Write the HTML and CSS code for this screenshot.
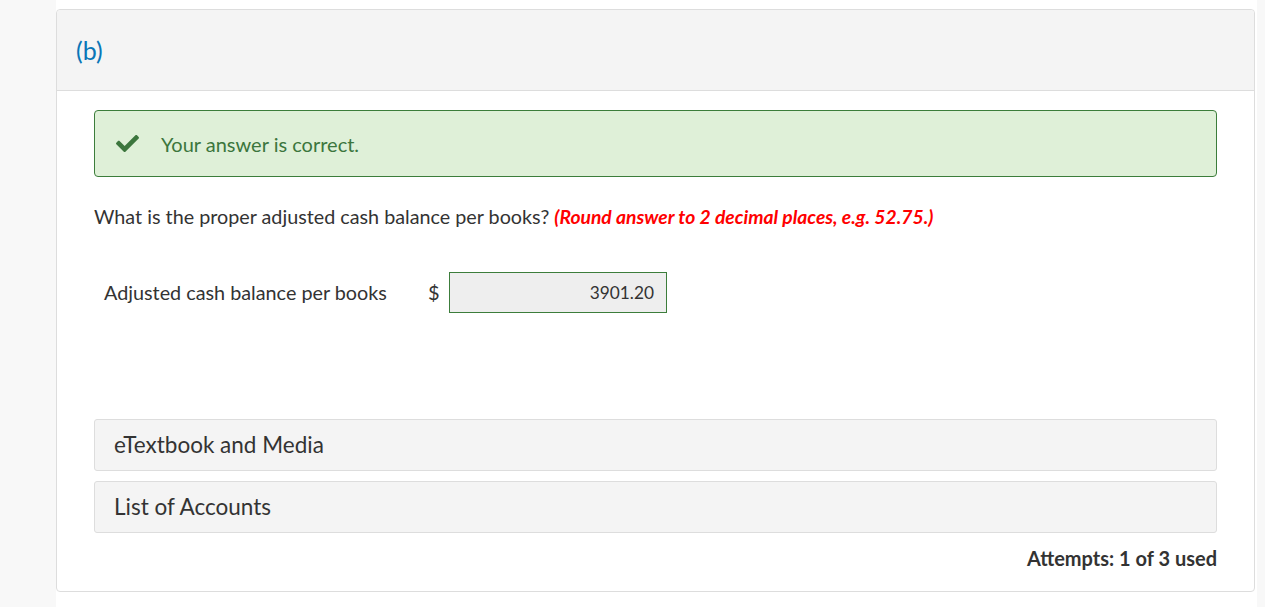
FILE: index.html
```html
<!DOCTYPE html>
<html lang="en">
<head>
<meta charset="utf-8">
<title>Question (b)</title>
<link rel="stylesheet" href="styles.css">
</head>
<body>
<div class="page">
  <aside class="gutter"></aside>
  <main class="main">
    <section class="card">
      <header class="card-head"><span class="part">(b)</span></header>
      <div class="card-body">
        <div class="alert">
          <svg class="check" viewBox="0 0 512 512" aria-hidden="true"><path d="M173.898 439.404l-166.4-166.4c-9.997-9.997-9.997-26.206 0-36.204l36.203-36.204c9.997-9.998 26.207-9.998 36.204 0L192 312.69 432.095 72.596c9.997-9.997 26.207-9.997 36.204 0l36.203 36.204c9.997 9.997 9.997 26.206 0 36.204l-294.4 294.401c-9.998 9.997-26.207 9.997-36.204-.001z"/></svg>
          <span class="alert-text">Your answer is correct.</span>
        </div>
        <p class="question">What is the proper adjusted cash balance per books? <em class="hint">(Round answer to 2 decimal places, e.g. 52.75.)</em></p>
        <div class="answer-row">
          <span class="answer-label">Adjusted cash balance per books</span>
          <span class="currency">$</span>
          <span class="answer-box">3901.20</span>
        </div>
        <div class="panels">
          <div class="panel">eTextbook and Media</div>
          <div class="panel">List of Accounts</div>
        </div>
        <div class="attempts">Attempts: 1 of 3 used</div>
      </div>
    </section>
  </main>
  <aside class="gutter-right"></aside>
</div>
</body>
</html>
```
FILE: styles.css
```css
* { box-sizing: border-box; }
html, body { margin: 0; padding: 0; }
body {
  font-family: Lato, "Open Sans", sans-serif;
  color: #333;
  background: #fff;
}
.page {
  display: flex;
  min-height: 607px;
}
.gutter {
  width: 56px;
  flex: none;
  background: #f8f8f8;
}
.gutter-right {
  width: 8px;
  flex: none;
  background: #f8f8f8;
  margin-left: 2px;
}
.main {
  flex: 1;
  padding-top: 9px;
}
.card {
  border: 1px solid #ddd;
  border-radius: 4px;
  background: #fff;
}
.card-head {
  height: 81px;
  background: #f4f4f4;
  border-bottom: 1px solid #ddd;
  border-radius: 4px 4px 0 0;
  display: flex;
  align-items: center;
  padding-left: 19px;
}
.part {
  color: #0a76b7;
  font-size: 25px;
}
.card-body {
  padding: 19px 37px 21px 37px;
}
.alert {
  height: 67px;
  background: #dff0d8;
  border: 1px solid #3c7d3b;
  border-radius: 4px;
  display: flex;
  align-items: center;
  padding-left: 21px;
  color: #3c763d;
}
.check {
  width: 23px;
  height: 23px;
  fill: #3c763d;
  margin-right: 22px;
}
.alert-text {
  font-size: 20px;
}
.question {
  margin: 28px 0 0;
  font-size: 19.75px;
  line-height: 1.2;
}
.hint {
  color: #f00;
  font-weight: bold;
  font-size: 19.3px;
}
.answer-row {
  margin-top: 43px;
  display: flex;
  align-items: center;
  padding-left: 10px;
}
.answer-label {
  font-size: 19.8px;
  width: 324px;
}
.currency {
  font-size: 20px;
  width: 21px;
}
.answer-box {
  width: 218px;
  height: 41px;
  border: 1px solid #3c7d3b;
  background: #eee;
  display: flex;
  align-items: center;
  justify-content: flex-end;
  padding-right: 12px;
  font-size: 17.3px;
}
.panels {
  margin-top: 106px;
  display: flex;
  flex-direction: column;
  gap: 10px;
}
.panel {
  height: 52px;
  background: #f4f4f4;
  border: 1px solid #ddd;
  border-radius: 3px;
  display: flex;
  align-items: center;
  padding-left: 19px;
  font-size: 22.5px;
}
.attempts {
  margin-top: 13px;
  text-align: right;
  font-weight: bold;
  font-size: 20px;
}
```
